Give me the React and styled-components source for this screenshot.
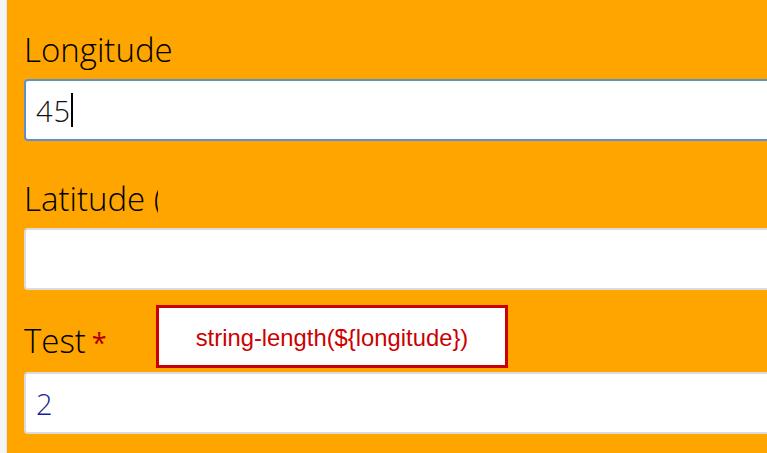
import React from "react";
import styled, { createGlobalStyle } from "styled-components";

const Global = createGlobalStyle`
  html, body { margin: 0; padding: 0; }
  body { background: #f4f4f4; overflow: hidden; }
`;

const Page = styled.div`
  display: flex;
  min-height: 100vh;
  height: 453px;
`;

const Sidebar = styled.div`
  width: 6px;
  flex: none;
  background: #f4f5f5;
  border-right: 1px solid #e3e3e3;
`;

const Main = styled.div`
  position: relative;
  flex: 1;
  background: #ffa500;
  padding: 33px 0 0 17px;
  overflow: hidden;
`;

const Field = styled.div`
  margin-top: ${(p) => p.$top || 0}px;
`;

const Label = styled.label`
  display: flex;
  align-items: baseline;
  gap: 6px;
  font-family: "Open Sans", Lato, sans-serif;
  font-weight: 300;
  font-size: 33px;
  line-height: 34px;
  color: #000;
  margin-bottom: 12px;
`;

const Clip = styled.span`
  display: inline-block;
  max-width: ${(p) => p.$max}px;
  overflow: hidden;
  white-space: nowrap;
`;

const Required = styled.span`
  color: #b00000;
  font-size: 27px;
  font-weight: 400;
`;

const Value = styled.div`
  box-sizing: border-box;
  width: calc(100% + 40px);
  height: 62px;
  display: flex;
  align-items: center;
  padding: 0 10px;
  background: #fff;
  border: 2px solid ${(p) => (p.$focus ? "#6090cc" : "#dcdcdc")};
  border-radius: 4px;
  font-family: "Open Sans", Lato, sans-serif;
  font-weight: 300;
  font-size: 29px;
  letter-spacing: 1px;
  color: ${(p) => p.$color || "#111"};
`;

const Caret = styled.span`
  display: inline-block;
  width: 2px;
  height: 34px;
  background: #000;
`;

const Tip = styled.div`
  position: absolute;
  left: 149px;
  top: 305px;
  width: 352px;
  height: 63px;
  box-sizing: border-box;
  border: 3px solid #cc0000;
  background: #fff;
  display: flex;
  align-items: center;
  justify-content: center;
  padding-top: 2px;
  font-family: "Liberation Sans", Arial, sans-serif;
  font-size: 23.8px;
  color: #cc0000;
`;

export default function App() {
  return (
    <>
      <Global />
      <Page>
        <Sidebar />
        <Main>
          <Field>
            <Label>Longitude</Label>
            <Value $focus>
              45
              <Caret />
            </Value>
          </Field>
          <Field $top={41}>
            <Label>
              <Clip $max={134}>Latitude (degrees)</Clip>
            </Label>
            <Value />
          </Field>
          <Field $top={34}>
            <Label>
              Test
              <Required>*</Required>
            </Label>
            <Value $color="#1c1c9a">2</Value>
          </Field>
          <Tip>string-length(${"{longitude}"})</Tip>
        </Main>
      </Page>
    </>
  );
}
